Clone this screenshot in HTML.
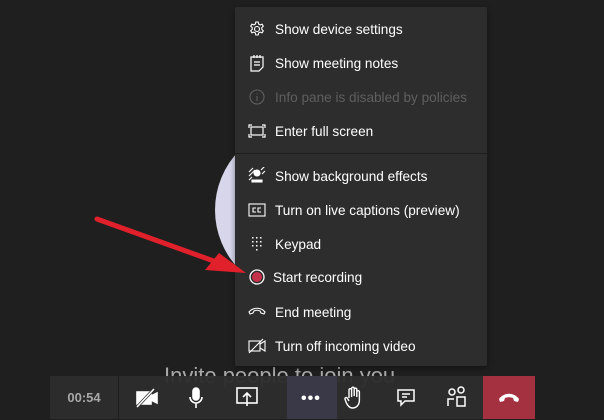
<!DOCTYPE html>
<html><head><style>
body{margin:0;width:604px;height:420px;background:#1f1f1f;overflow:hidden;position:relative;font-family:"Liberation Sans",sans-serif}
.circ{position:absolute;left:215px;top:125px;width:170px;height:170px;border-radius:50%;background:#d7d6ea}
.invite{position:absolute;left:164px;top:363px;font-size:22px;color:#a9a9a9;white-space:nowrap}
.bar{position:absolute;left:50px;top:376px;width:485px;height:43px;background:rgba(45,45,45,0.96)}
.timer{position:absolute;left:0;top:0;width:68px;height:43px;border-right:1px solid #1c1c1c;color:#a8a8a8;font-size:13px;font-weight:bold;text-align:center;line-height:43px}
.more{position:absolute;left:237px;top:0;width:50px;height:43px;background:#393947}
.end{position:absolute;left:433px;top:0;width:52px;height:43px;background:#a4313f}
.menu{position:absolute;left:235px;top:7px;width:252px;height:359px;background:#2d2d2d;border-radius:2px;box-shadow:0 2px 6px rgba(0,0,0,.4)}
.sep{position:absolute;left:0;right:0;top:146px;height:1px;background:#1e1e1e}
.it{position:absolute;left:40px;font-size:13.6px;color:#fff;white-space:nowrap;line-height:16px;margin-top:1px}
.it.dis{color:#5f5f5f}
svg.i{position:absolute}
</style></head><body>
<div class="circ"></div>
<div class="invite">Invite people to join you</div>
<div class="bar">
 <div class="timer">00:54</div>
 <svg class="i" style="left:85px;top:12px" width="24" height="20" viewBox="0 0 24 20" fill="none" stroke="#fff" stroke-width="1.6"><rect x="2" y="4" width="14" height="12" fill="#fff"/><path d="M16 8l6-3v10l-6-3" fill="#fff"/><path d="M2 19L19 1" stroke="#2d2d2d" stroke-width="3"/><path d="M2 19L19 1"/></svg>
 <svg class="i" style="left:138px;top:11px" width="16" height="22" viewBox="0 0 16 22" fill="none" stroke="#fff" stroke-width="1.6"><rect x="5" y="1" width="6" height="12" rx="3" fill="#fff"/><path d="M2 10a6 6 0 0 0 12 0M8 16v5"/></svg>
 <svg class="i" style="left:186px;top:11px" width="22" height="20" viewBox="0 0 22 20" fill="none" stroke="#fff" stroke-width="1.6"><rect x="1" y="1" width="20" height="15"/><path d="M11 19V7M7 10l4-4 4 4"/></svg>
 <div class="more"><span style="position:absolute;left:14px;top:14px;color:#fff;font-size:16px;letter-spacing:1px;font-weight:bold">•••</span></div>
 <svg class="i" style="left:294px;top:10px" width="18" height="23" viewBox="0 0 18 23" fill="none" stroke="#fff" stroke-width="1.4"><path d="M5 12V4a1.3 1.3 0 0 1 2.6 0V11M7.6 10V2.5a1.3 1.3 0 0 1 2.6 0V10M10.2 10V3.5a1.3 1.3 0 0 1 2.6 0V11M12.8 11V6a1.3 1.3 0 0 1 2.6 0v8c0 5-3 8-7 8-3 0-4.5-2-6-5l-1.5-4a1.3 1.3 0 0 1 2.3-1L5 15"/></svg>
 <svg class="i" style="left:346px;top:12px" width="20" height="20" viewBox="0 0 20 20" fill="none" stroke="#fff" stroke-width="1.5"><path d="M2 2h16v11H9l-4 4v-4H2z"/><path d="M6 6h8M6 9h5"/></svg>
 <svg class="i" style="left:396px;top:10px" width="22" height="22" viewBox="0 0 22 22" fill="none" stroke="#fff" stroke-width="1.5"><circle cx="6" cy="6" r="3"/><circle cx="15" cy="4" r="3"/><path d="M2 20v-7h6M11 20v-9h8v9z"/></svg>
 <div class="end"><svg style="position:absolute;left:15px;top:15px" width="22" height="12" viewBox="0 0 22 12"><path d="M1 8c5-7 15-7 20 0l-1 3-4-1-1-3c-3-1-5-1-8 0l-1 3-4 1z" fill="#fff"/></svg></div>
</div>
<div class="menu">
 <div class="sep"></div>
 <svg class="i" style="left:14px;top:14px" width="16" height="16" viewBox="0 0 16 16" fill="none" stroke="#fff" stroke-width="1.1"><circle cx="8" cy="8" r="2.5"/><path d="M6.8 1h2.4l.4 2 1.6.9 1.9-.7 1.2 2-1.5 1.4v1.8l1.5 1.4-1.2 2-1.9-.7-1.6.9-.4 2H6.8l-.4-2-1.6-.9-1.9.7-1.2-2 1.5-1.4V6.6L1.7 5.2l1.2-2 1.9.7 1.6-.9z"/></svg>
 <div class="it" style="top:14px">Show device settings</div>
 <svg class="i" style="left:15px;top:47px" width="14" height="18" viewBox="0 0 14 18" fill="none" stroke="#fff" stroke-width="1.2"><path d="M1 3h12v10l-4 4H1z"/><path d="M4 1v3M7 1v3M10 1v3M4 8h6M4 11h6"/></svg>
 <div class="it" style="top:48px">Show meeting notes</div>
 <svg class="i" style="left:14px;top:82px" width="16" height="16" viewBox="0 0 16 16" fill="none" stroke="#5f5f5f" stroke-width="1.1"><circle cx="8" cy="8" r="7"/><path d="M8 7v5M8 4.5v1"/></svg>
 <div class="it dis" style="top:82px">Info pane is disabled by policies</div>
 <svg class="i" style="left:13px;top:117px" width="18" height="14" viewBox="0 0 18 14" fill="none" stroke="#fff" stroke-width="1.2"><rect x="3" y="3" width="12" height="8"/><path d="M1 4V1h3M14 1h3v3M1 10v3h3M14 13h3v-3"/></svg>
 <div class="it" style="top:116px">Enter full screen</div>
 <svg class="i" style="left:13px;top:160px" width="18" height="16" viewBox="0 0 18 16" fill="none" stroke="#fff" stroke-width="1.1"><circle cx="9" cy="6" r="3" fill="#fff"/><path d="M4 13h10v2H4z" fill="#fff"/><path d="M1 5l4-4M1 9l6-6M13 3l4-4M14 7l3-3M1 13l3-3"/></svg>
 <div class="it" style="top:161px">Show background effects</div>
 <svg class="i" style="left:13px;top:196px" width="18" height="14" viewBox="0 0 18 14" fill="none" stroke="#fff" stroke-width="1.1"><rect x="1" y="1" width="16" height="12"/><path d="M8 5H5v4h3M13 5h-3v4h3"/></svg>
 <div class="it" style="top:195px">Turn on live captions (preview)</div>
 <svg class="i" style="left:16px;top:229px" width="12" height="16" viewBox="0 0 12 16" fill="#fff"><rect x="1" y="1" width="1.5" height="1.5"/><rect x="5" y="1" width="1.5" height="1.5"/><rect x="9" y="1" width="1.5" height="1.5"/><rect x="1" y="5" width="1.5" height="1.5"/><rect x="5" y="5" width="1.5" height="1.5"/><rect x="9" y="5" width="1.5" height="1.5"/><rect x="1" y="9" width="1.5" height="1.5"/><rect x="5" y="9" width="1.5" height="1.5"/><rect x="9" y="9" width="1.5" height="1.5"/><rect x="5" y="13" width="1.5" height="1.5"/></svg>
 <div class="it" style="top:229px">Keypad</div>
 <svg class="i" style="left:14px;top:262px" width="16" height="16" viewBox="0 0 16 16"><circle cx="8" cy="8" r="7" fill="none" stroke="#fff" stroke-width="1.3"/><circle cx="8" cy="8" r="5" fill="#c4314b"/></svg>
 <div class="it" style="top:262px;left:38px">Start recording</div>
 <svg class="i" style="left:13px;top:299px" width="18" height="10" viewBox="0 0 18 10" fill="none" stroke="#fff" stroke-width="1.1"><path d="M1 6c4-5 12-5 16 0l-1 2-3-1-1-2c-2-1-4-1-6 0l-1 2-3 1z"/></svg>
 <div class="it" style="top:297px">End meeting</div>
 <svg class="i" style="left:13px;top:331px" width="18" height="16" viewBox="0 0 18 16" fill="none" stroke="#fff" stroke-width="1.1"><rect x="1" y="3" width="11" height="10"/><path d="M12 6l5-3v10l-5-3M1 15L15 1"/></svg>
 <div class="it" style="top:331px">Turn off incoming video</div>
</div>
<svg style="position:absolute;left:0;top:0" width="604" height="420"><path d="M97 219L222 264" stroke="#e0202a" stroke-width="5" stroke-linecap="round"/><path d="M246 273L205 270L219 253z" fill="#e0202a"/></svg>
</body></html>
